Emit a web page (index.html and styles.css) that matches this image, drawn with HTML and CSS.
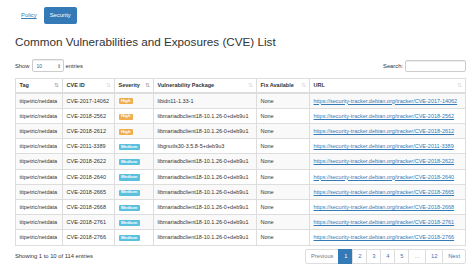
FILE: index.html
```html
<!DOCTYPE html>
<html lang="en">
<head>
    <meta charset="UTF-8">
    <meta name="viewport" content="width=device-width, initial-scale=1.0">
    <title>Security</title>
    <link rel="stylesheet" href="styles.css">
</head>
<body>

    <ul class="nav-pills">
        <li><a href="#">Policy</a></li>
        <li class="active"><a href="#">Security</a></li>
    </ul>

    <h2>Common Vulnerabilities and Exposures (CVE) List</h2>

    <div class="table-top">
        <label class="length">Show
            <span class="select-wrap">
                <select>
                    <option>10</option>
                    <option>25</option>
                    <option>50</option>
                </select>
                <span class="caret">&#8661;</span>
            </span>
            entries</label>
        <label class="search">Search: <input type="search"></label>
    </div>

    <table class="cve-table">
        <colgroup>
            <col style="width: 47px">
            <col style="width: 52px">
            <col style="width: 39px">
            <col style="width: 103px">
            <col style="width: 53px">
            <col>
        </colgroup>
        <thead>
            <tr>
                <th class="sorted">Tag</th>
                <th>CVE ID</th>
                <th class="sorted">Severity</th>
                <th>Vulnerability Package</th>
                <th>Fix Available</th>
                <th>URL</th>
            </tr>
        </thead>
        <tbody id="rows"></tbody>
    </table>

    <div class="table-bottom">
        <div class="info">Showing 1 to 10 of 114 entries</div>
        <ul class="pagination">
            <li class="disabled"><a href="#">Previous</a></li>
            <li class="active"><a href="#">1</a></li>
            <li><a href="#">2</a></li>
            <li><a href="#">3</a></li>
            <li><a href="#">4</a></li>
            <li><a href="#">5</a></li>
            <li class="disabled"><a href="#">&hellip;</a></li>
            <li><a href="#">12</a></li>
            <li><a href="#">Next</a></li>
        </ul>
    </div>

    <script>
        const cves = [
            ['CVE-2017-14062', 'High', 'libidn11-1.33-1'],
            ['CVE-2018-2562', 'High', 'libmariadbclient18-10.1.26-0+deb9u1'],
            ['CVE-2018-2612', 'High', 'libmariadbclient18-10.1.26-0+deb9u1'],
            ['CVE-2011-3389', 'Medium', 'libgnutls30-3.5.8-5+deb9u3'],
            ['CVE-2018-2622', 'Medium', 'libmariadbclient18-10.1.26-0+deb9u1'],
            ['CVE-2018-2640', 'Medium', 'libmariadbclient18-10.1.26-0+deb9u1'],
            ['CVE-2018-2665', 'Medium', 'libmariadbclient18-10.1.26-0+deb9u1'],
            ['CVE-2018-2668', 'Medium', 'libmariadbclient18-10.1.26-0+deb9u1'],
            ['CVE-2018-2761', 'Medium', 'libmariadbclient18-10.1.26-0+deb9u1'],
            ['CVE-2018-2766', 'Medium', 'libmariadbclient18-10.1.26-0+deb9u1']
        ];

        const tbody = document.getElementById('rows');
        cves.forEach(function (c) {
            const url = 'https://security-tracker.debian.org/tracker/' + c[0];
            const label = c[1] === 'High' ? 'label-warning' : 'label-info';
            const tr = document.createElement('tr');
            tr.innerHTML =
                '<td>titpetric/netdata</td>' +
                '<td>' + c[0] + '</td>' +
                '<td><span class="label ' + label + '">' + c[1] + '</span></td>' +
                '<td>' + c[2] + '</td>' +
                '<td>None</td>' +
                '<td><a href="' + url + '">' + url + '</a></td>';
            tbody.appendChild(tr);
        });
    </script>

</body>
</html>
```

FILE: styles.css
```css
body {
    font-family: "Liberation Sans", Arial, sans-serif;
    font-size: 5.8px;
    line-height: 8.2px;
    color: #333;
    background-color: #fff;
    margin: 0;
    padding: 7px 8px 0 15px;
}
a {
    color: #337ab7;
}
.nav-pills {
    list-style: none;
    margin: 0;
    padding: 0;
    display: flex;
    gap: 1px;
}
.nav-pills a {
    display: block;
    padding: 4.3px 6.1px;
    border-radius: 2px;
}
.nav-pills .active a {
    background-color: #337ab7;
    color: #fff;
    text-decoration: none;
}
h2 {
    font-size: 11.7px;
    line-height: 12.6px;
    font-weight: 500;
    margin: 12px 0 11px;
}
.table-top {
    display: flex;
    justify-content: space-between;
    align-items: center;
    height: 13px;
    margin-bottom: 6px;
}
.table-top label {
    display: flex;
    align-items: center;
    gap: 2px;
}
.select-wrap {
    position: relative;
    display: inline-block;
}
.select-wrap select {
    appearance: none;
    -webkit-appearance: none;
    width: 32px;
    height: 13px;
    padding: 0 4px;
    font-family: inherit;
    font-size: 5px;
    color: #555;
    background: #fff;
    border: 1px solid #ccc;
    border-radius: 2px;
    box-shadow: inset 0 1px 1px rgba(0, 0, 0, 0.075);
}
.caret {
    position: absolute;
    right: 3px;
    top: 2.5px;
    font-size: 5px;
    color: #555;
}
.search input {
    width: 61px;
    height: 12px;
    box-sizing: border-box;
    border: 1px solid #ccc;
    border-radius: 2px;
    box-shadow: inset 0 1px 1px rgba(0, 0, 0, 0.075);
    margin: 0;
}
.cve-table {
    width: 100%;
    table-layout: fixed;
    border-collapse: collapse;
    border: 1px solid #ddd;
    font-size: 5.5px;
}
.cve-table th,
.cve-table td {
    border: 1px solid #ddd;
    padding: 3px 3.5px;
    text-align: left;
    white-space: nowrap;
    overflow: hidden;
}
.cve-table th {
    font-weight: bold;
    padding: 2px 3.5px;
    border-bottom-width: 2px;
    position: relative;
}
.cve-table th::after {
    content: "\21C5";
    position: absolute;
    right: 3px;
    top: 2px;
    font-weight: normal;
    opacity: 0.2;
}
.cve-table th.sorted::after {
    opacity: 0.5;
}
.cve-table tbody tr:nth-child(odd) {
    background-color: #f9f9f9;
}
.label {
    display: inline-block;
    padding: 0.8px 2.5px;
    font-size: 4.3px;
    line-height: 4.6px;
    font-weight: bold;
    color: #fff;
    border-radius: 1px;
    vertical-align: 0.5px;
}
.label-warning {
    background-color: #f0ad4e;
}
.label-info {
    background-color: #5bc0de;
}
.table-bottom {
    display: flex;
    justify-content: space-between;
    align-items: center;
    margin-top: 3px;
}
.pagination {
    list-style: none;
    margin: 0;
    padding: 0;
    display: flex;
}
.pagination a {
    display: block;
    padding: 2.5px 4.9px;
    border: 1px solid #ddd;
    margin-left: -1px;
    text-decoration: none;
    background-color: #fff;
}
.pagination li:first-child a {
    margin-left: 0;
    border-radius: 2px 0 0 2px;
}
.pagination li:last-child a {
    border-radius: 0 2px 2px 0;
}
.pagination .active a {
    background-color: #337ab7;
    border-color: #337ab7;
    color: #fff;
}
.pagination .disabled a {
    color: #777;
}
```
